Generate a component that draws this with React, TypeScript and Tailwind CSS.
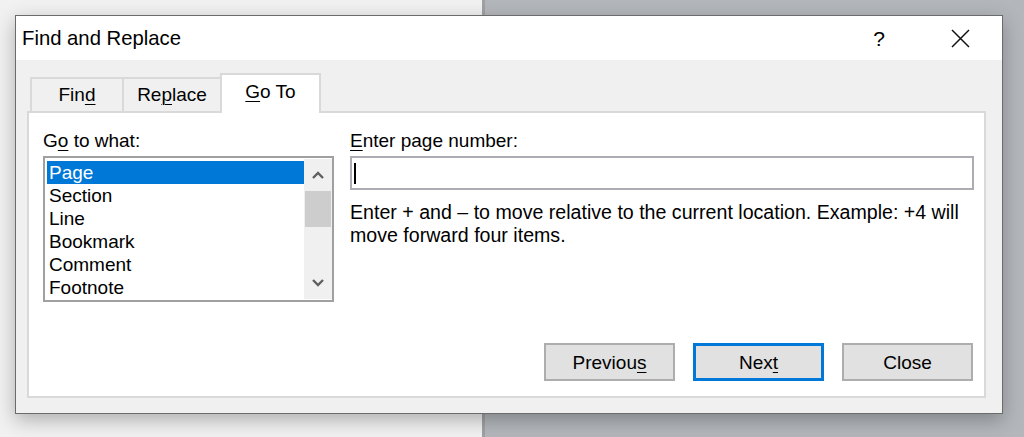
import React from "react";

const U = ({ children }: { children: React.ReactNode }) => (
  <span className="underline decoration-1 underline-offset-[3px]">{children}</span>
);

function Chevron({ up }: { up?: boolean }) {
  return (
    <svg width="12" height="8" viewBox="0 0 12 8">
      <polyline
        points={up ? "1,7 6,2 11,7" : "1,1 6,6 11,1"}
        fill="none"
        stroke="#606060"
        strokeWidth="2.4"
      />
    </svg>
  );
}

export default function App() {
  const items = ["Page", "Section", "Line", "Bookmark", "Comment", "Footnote"];
  return (
    <div
      className="relative flex w-[1024px] h-[437px] overflow-hidden text-black"
      style={{ fontFamily: '"Liberation Sans", Arial, sans-serif' }}
    >
      <div className="w-[482px] h-full bg-[#f1f1f1]" />
      <div className="flex-1 h-full bg-[#b3b7bb] border-l-[3px] border-[#9ea2a6]" />

      {/* Dialog window */}
      <div className="absolute left-[15px] top-[15px] w-[988px] h-[399px] flex flex-col bg-[#f0f0f0] border border-[#6b6b6b] shadow-[0_6px_18px_rgba(0,0,0,0.28)]">
        {/* Title bar */}
        <div className="h-[44px] bg-white flex items-center pl-[6px] shrink-0">
          <span className="text-[20.3px] leading-none flex-1">Find and Replace</span>
          <span className="text-[21px] leading-none mr-[66px]">?</span>
          <svg width="19" height="19" viewBox="0 0 19 19" className="mr-[32px]">
            <path d="M1 1 L18 18 M18 1 L1 18" stroke="#111" strokeWidth="1.5" />
          </svg>
        </div>

        {/* Body */}
        <div className="flex-1 flex flex-col pl-[11px] pr-[16px] pt-[13px] pb-[15px]">
          {/* Tabs */}
          <div className="flex items-end h-[38px] pl-[3px] shrink-0">
            <div className="w-[92px] h-[34px] border-t-2 border-l-2 border-[#d9d9d9] bg-[#f0f0f0] flex items-center justify-center text-[19px]">
              Fin<U>d</U>
            </div>
            <div className="w-[98px] h-[34px] border-t-2 border-l-2 border-[#d9d9d9] bg-[#f0f0f0] flex items-center justify-center text-[19px]">
              Re<U>p</U>lace
            </div>
            <div className="relative z-10 w-[101px] h-[40px] -mb-[2px] border-t-2 border-l-2 border-r-2 border-[#d9d9d9] bg-white flex items-center justify-center text-[19px] pb-[4px]">
              <U>G</U>o To
            </div>
          </div>

          {/* Tab panel */}
          <div className="flex-1 bg-white border-2 border-[#d9d9d9] flex flex-col pl-[14px] pr-[10px] pt-[16px] pb-[15px]">
            <div className="flex gap-[16px]">
              {/* Left column */}
              <div className="w-[291px] flex flex-col">
                <div className="text-[19px] leading-[23px] h-[27px]">
                  G<U>o</U> to what:
                </div>
                <div className="h-[146px] border-2 border-[#a0a0a0] flex p-[2px] pt-[3px] pr-0">
                  <div className="flex-1 flex flex-col">
                    {items.map((it, i) => (
                      <div
                        key={it}
                        className={
                          "h-[23px] leading-[23px] text-[19px] pl-[2px] " +
                          (i === 0 ? "bg-[#0078d7] text-white" : "")
                        }
                      >
                        {it}
                      </div>
                    ))}
                  </div>
                  <div className="w-[28px] bg-[#f0f0f0] flex flex-col items-center -mt-[2px] -mb-[1px]">
                    <div className="h-[32px] flex items-center justify-center">
                      <Chevron up />
                    </div>
                    <div className="w-[26px] h-[36px] bg-[#cdcdcd]" />
                    <div className="flex-1" />
                    <div className="h-[32px] flex items-center justify-center">
                      <Chevron />
                    </div>
                  </div>
                </div>
              </div>

              {/* Right column */}
              <div className="flex-1 flex flex-col">
                <div className="text-[19px] leading-[23px] h-[27px]">
                  <U>E</U>nter page number:
                </div>
                <div className="h-[34px] border-2 border-[#abadb3] flex items-center pl-[2px]">
                  <div className="w-[1.5px] h-[21px] bg-black" />
                </div>
                <div className="text-[19.6px] leading-[23px] mt-[11px] pr-[8px]">
                  Enter + and – to move relative to the current location. Example: +4 will move forward four items.
                </div>
              </div>
            </div>

            <div className="mt-auto flex justify-end gap-[18px] pr-[1px]">
              <button className="w-[131px] h-[38px] bg-[#e1e1e1] border-2 border-[#adadad] text-[19px] leading-none">
                Previou<U>s</U>
              </button>
              <button className="w-[131px] h-[38px] bg-[#e1e1e1] border-[3px] border-[#0078d7] text-[19px] leading-none">
                Nex<U>t</U>
              </button>
              <button className="w-[131px] h-[38px] bg-[#e1e1e1] border-2 border-[#adadad] text-[19px] leading-none">
                Close
              </button>
            </div>
          </div>
        </div>
      </div>
    </div>
  );
}
